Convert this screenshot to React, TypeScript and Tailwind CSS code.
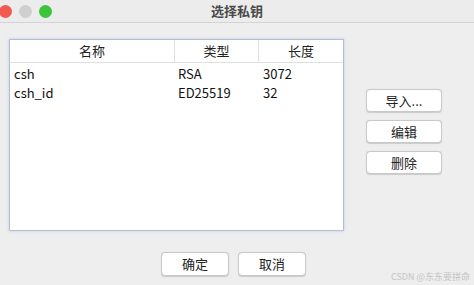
import React from "react";

const font = { fontFamily: '"Noto Sans CJK SC", "Liberation Sans", sans-serif' };

function Btn({ label, className }: { label: string; className: string }) {
  return (
    <div
      className={`flex items-center justify-center rounded-[4px] border border-[#c8c8c8] bg-white text-[13px] text-[#222] shadow-[0_0.5px_1px_rgba(0,0,0,0.15)] ${className}`}
    >
      {label}
    </div>
  );
}

export default function App() {
  const rows = [
    ["csh", "RSA", "3072"],
    ["csh_id", "ED25519", "32"],
  ];
  return (
    <div className="relative h-[285px] w-[474px] overflow-hidden bg-[#eeeeee]" style={font}>
      {/* Title bar */}
      <div className="relative flex h-[23px] items-center border-b border-[#d4d4d4] bg-[#ececec]">
        <div className="ml-[0px] flex items-center gap-[7px] pl-[0px]">
          <div className="ml-[-1px] h-[13px] w-[13px] rounded-full bg-[#f25a50]" />
          <div className="h-[13px] w-[13px] rounded-full bg-[#cfcfcf]" />
          <div className="h-[13px] w-[13px] rounded-full bg-[#3ec43a]" />
        </div>
        <div className="absolute left-0 right-0 top-0 flex h-[22px] items-center justify-center text-[13px] font-bold text-[#4a4a4a]">
          选择私钥
        </div>
      </div>

      <div className="flex pl-[9px] pt-[16px]">
        {/* table */}
        <div className="h-[192px] w-[335px] border border-[#b3bfd0] bg-white shadow-[0_0_3px_rgba(140,170,220,0.45)]">
          <div className="flex h-[23px] border-b border-[#e0e0e0] text-[13px] text-[#222]">
            <div className="flex w-[165px] items-center justify-center border-r border-[#e0e0e0]">名称</div>
            <div className="flex w-[84px] items-center justify-center border-r border-[#e0e0e0]">类型</div>
            <div className="flex flex-1 items-center justify-center">长度</div>
          </div>
          <div className="pt-[1px]">
            {rows.map((r) => (
              <div key={r[0]} className="flex h-[19px] items-center text-[13px] text-[#111]">
                <div className="w-[165px] pl-[4px]">{r[0]}</div>
                <div className="w-[84px] pl-[3px]">{r[1]}</div>
                <div className="flex-1 pl-[4px]">{r[2]}</div>
              </div>
            ))}
          </div>
        </div>

        {/* side buttons */}
        <div className="ml-[22px] flex flex-col gap-[8px] pt-[50px]">
          <Btn label="导入..." className="h-[23px] w-[76px]" />
          <Btn label="编辑" className="h-[23px] w-[76px]" />
          <Btn label="删除" className="h-[23px] w-[76px]" />
        </div>
      </div>

      {/* bottom buttons */}
      <div className="mt-[21px] flex gap-[9px] pl-[161px]">
        <Btn label="确定" className="h-[24px] w-[68px]" />
        <Btn label="取消" className="h-[24px] w-[68px]" />
      </div>

      <div className="absolute bottom-[2px] right-[4px] text-[9px] text-[#c4c4c4]">CSDN @东东要拼命</div>
    </div>
  );
}
